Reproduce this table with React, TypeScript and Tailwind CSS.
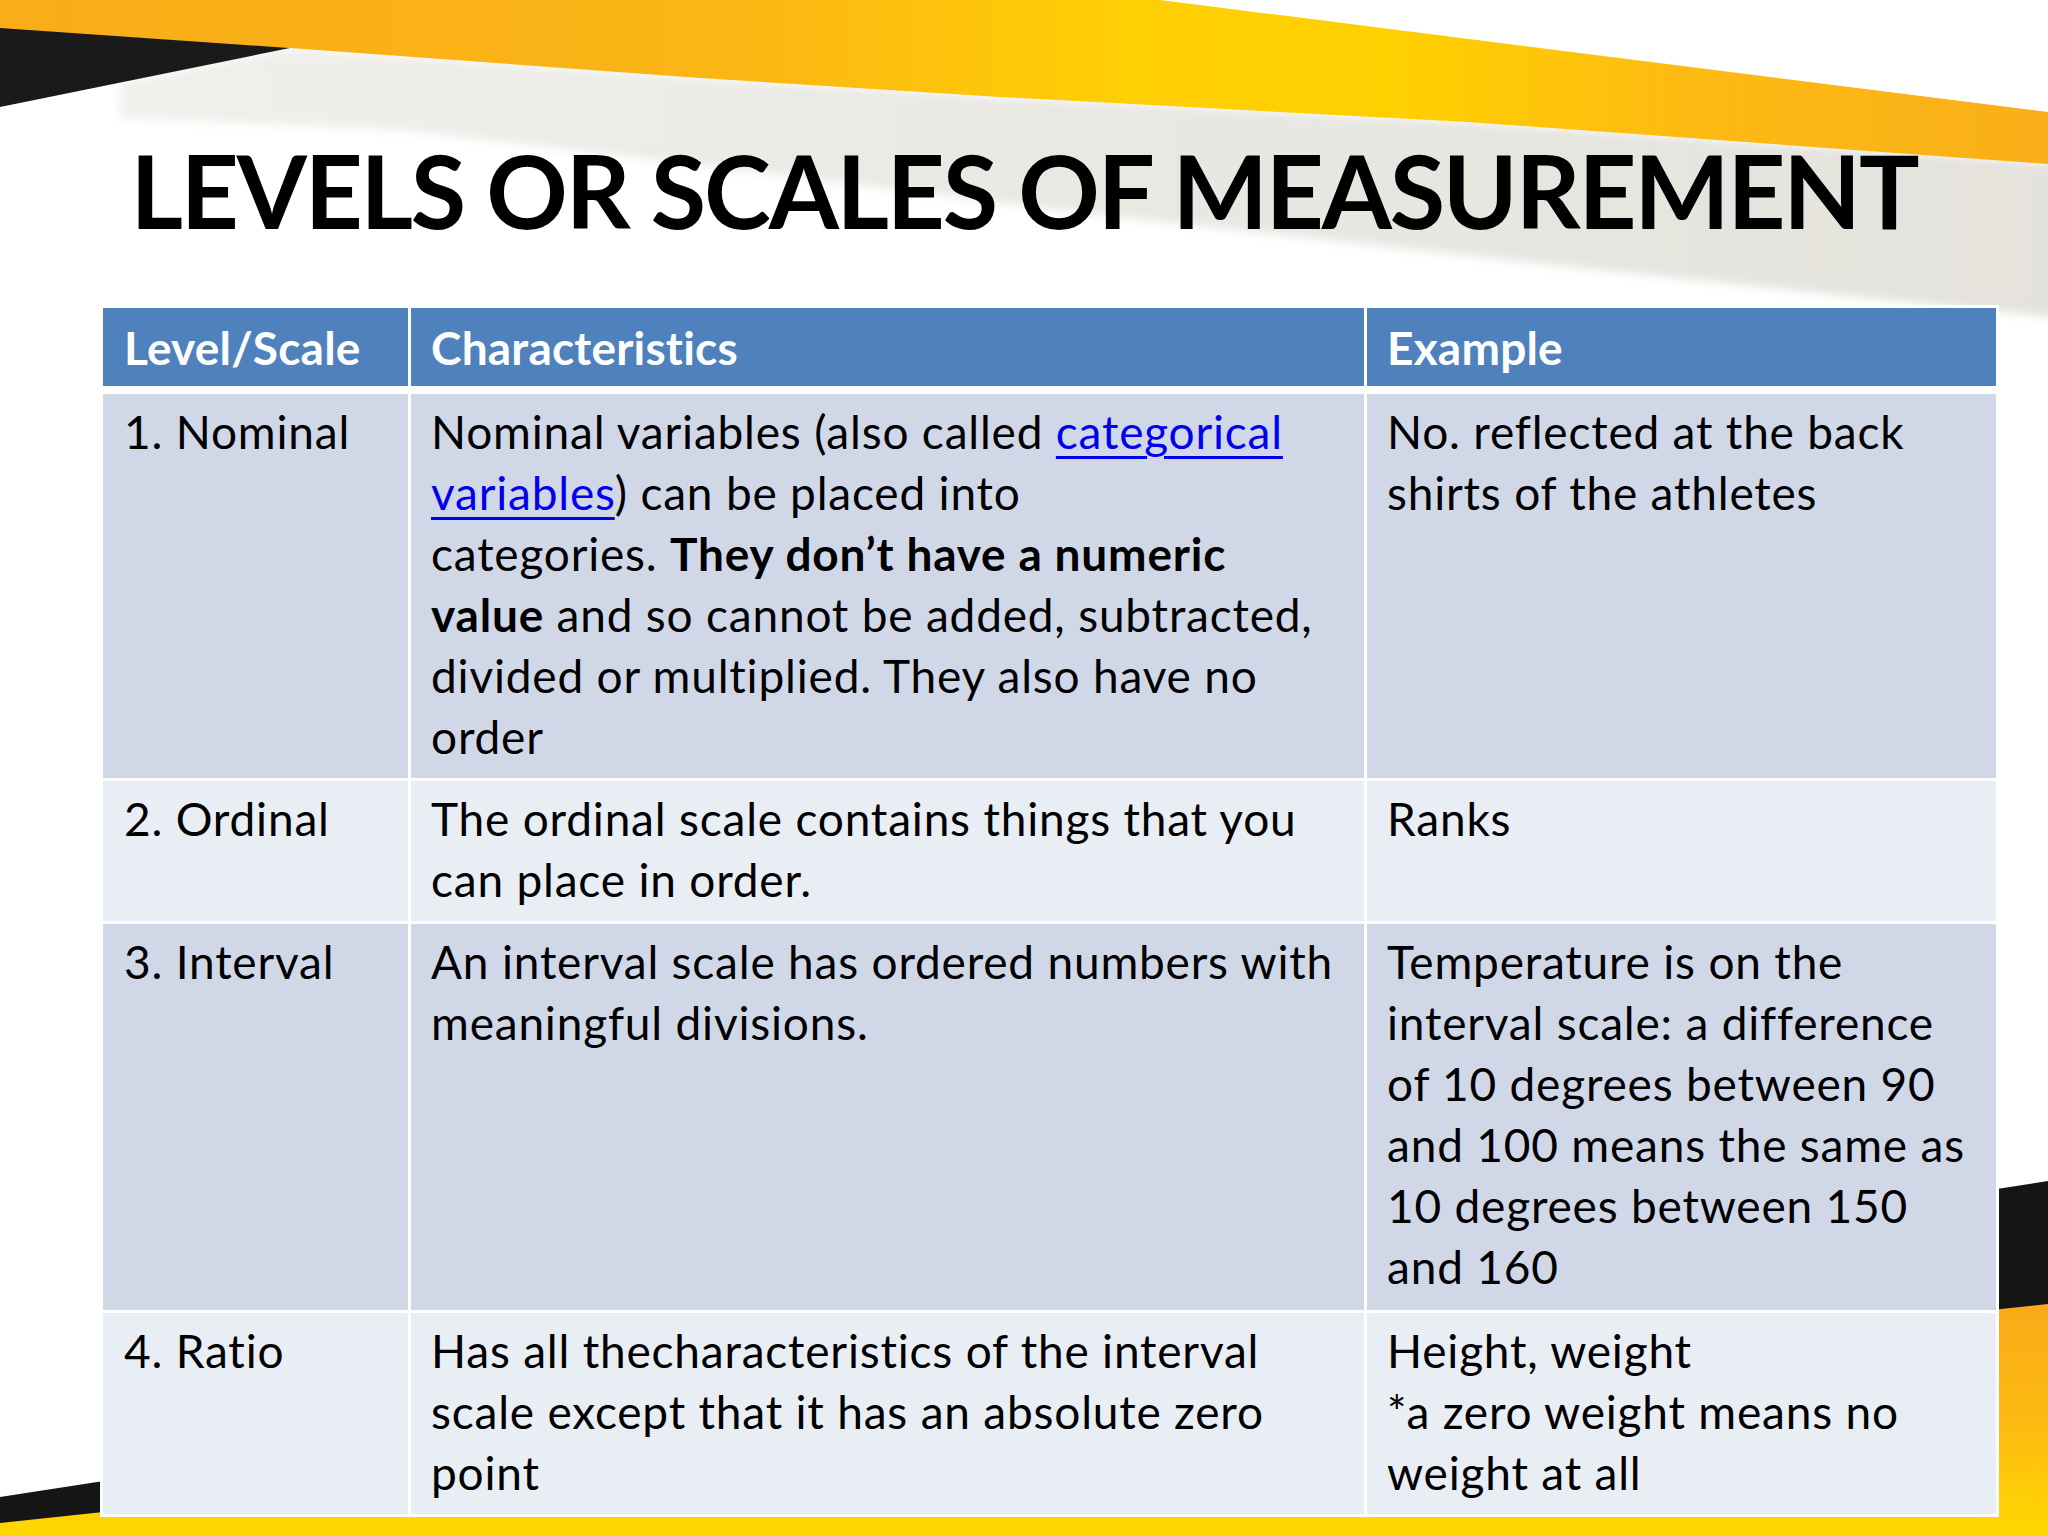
import React from "react";

const Link = ({ children }: { children: React.ReactNode }) => (
  <span className="text-[#0000ee] underline decoration-[2.5px] underline-offset-[7px]">{children}</span>
);

type Row = { bg: string; pb: string; c1: React.ReactNode; c2: React.ReactNode; c3: React.ReactNode };

const rows: Row[] = [
  {
    bg: "bg-[#d0d8e8]",
    pb: "pb-[11px]",
    c1: <>1. Nominal</>,
    c2: (
      <>
        Nominal variables (also called <Link>categorical</Link>
        <br />
        <Link>variables</Link>) can be placed into
        <br />
        categories. <b className="font-bold">They don’t have a numeric</b>
        <br />
        <b className="font-bold">value</b> and so cannot be added, subtracted,
        <br />
        divided or multiplied. They also have no
        <br />
        order
      </>
    ),
    c3: (
      <>
        No. reflected at the back
        <br />
        shirts of the athletes
      </>
    ),
  },
  {
    bg: "bg-[#e9edf4]",
    pb: "pb-[11px]",
    c1: <>2. Ordinal</>,
    c2: (
      <>
        The ordinal scale contains things that you
        <br />
        can place in order.
      </>
    ),
    c3: <>Ranks</>,
  },
  {
    bg: "bg-[#d0d8e8]",
    pb: "pb-[13px]",
    c1: <>3. Interval</>,
    c2: (
      <>
        An interval scale has ordered numbers with
        <br />
        meaningful divisions.
      </>
    ),
    c3: (
      <>
        Temperature is on the
        <br />
        interval scale: a difference
        <br />
        of 10 degrees between 90
        <br />
        and 100 means the same as
        <br />
        10 degrees between 150
        <br />
        and 160
      </>
    ),
  },
  {
    bg: "bg-[#e9edf4]",
    pb: "pb-[11px]",
    c1: <>4. Ratio</>,
    c2: (
      <>
        Has all thecharacteristics of the interval
        <br />
        scale except that it has an absolute zero
        <br />
        point
      </>
    ),
    c3: (
      <>
        Height, weight
        <br />
        *a zero weight means no
        <br />
        weight at all
      </>
    ),
  },
];

function Background() {
  return (
    <svg className="absolute inset-0" width={2048} height={1536} viewBox="0 0 2048 1536">
      <defs>
        <linearGradient id="topband" x1="0" y1="0" x2="2048" y2="0" gradientUnits="userSpaceOnUse">
          <stop offset="0" stopColor="#f8ad19" />
          <stop offset="0.35" stopColor="#fbb515" />
          <stop offset="0.55" stopColor="#ffcf05" />
          <stop offset="0.68" stopColor="#ffd000" />
          <stop offset="0.82" stopColor="#fdbb12" />
          <stop offset="1" stopColor="#f9af1a" />
        </linearGradient>
        <linearGradient id="greyband" x1="0" y1="0" x2="2048" y2="0" gradientUnits="userSpaceOnUse">
          <stop offset="0" stopColor="#f2f1ee" />
          <stop offset="0.5" stopColor="#e9e8e3" />
          <stop offset="1" stopColor="#e4e2dc" />
        </linearGradient>
        <linearGradient id="botband" x1="0" y1="1300" x2="0" y2="1536" gradientUnits="userSpaceOnUse">
          <stop offset="0" stopColor="#f9aa18" />
          <stop offset="0.55" stopColor="#fdbb12" />
          <stop offset="1" stopColor="#ffd800" />
        </linearGradient>
        <filter id="soft" x="-5%" y="-20%" width="110%" height="140%">
          <feGaussianBlur stdDeviation="5" />
        </filter>
      </defs>
      <polygon
        points="120,82 290,48 700,78 1000,97 1468,122 2048,163 2060,163 2060,318 1600,270 1100,215 700,165 400,130 120,118"
        fill="url(#greyband)"
        filter="url(#soft)"
      />
      <polygon
        points="0,0 1160,0 2048,112 2048,164 1468,122 1000,97 700,78 290,48 0,32"
        fill="url(#topband)"
      />
      <polygon points="0,28 290,48 0,107" fill="#1a1a1a" />
      <polygon points="0,1520 2048,1300 2048,1536 0,1536" fill="url(#botband)" />
      <polygon points="0,1497 2048,1181 2048,1304 0,1523" fill="#151515" />
    </svg>
  );
}

export default function App() {
  return (
    <div className="relative w-[2048px] h-[1536px] overflow-hidden bg-white font-['Lato',sans-serif] text-black">
      <Background />
      <div className="relative flex flex-col">
        <div className="h-[305px] pt-[139px]">
          <h1 className="text-center text-[101px] leading-[102px] font-bold tracking-[-2.2px] whitespace-nowrap">
            LEVELS OR SCALES OF MEASUREMENT
          </h1>
        </div>
        <div className="ml-[100px] w-[1899px] bg-white p-[3px] flex flex-col gap-[3px]">
          <div className="grid grid-cols-[305px_953px_629px] gap-x-[3px] mb-[5px] text-white font-bold text-[46px] leading-[61px] tracking-[0.2px]">
            <div className="bg-[#4f81bd] pl-[21px] pr-[10px] pt-[9px] pb-[8px] whitespace-nowrap">Level/Scale</div>
            <div className="bg-[#4f81bd] px-[20px] pt-[9px] pb-[8px] whitespace-nowrap">Characteristics</div>
            <div className="bg-[#4f81bd] px-[20px] pt-[9px] pb-[8px] whitespace-nowrap">Example</div>
          </div>
          {rows.map((r, i) => (
            <div key={i} className="grid grid-cols-[305px_953px_629px] gap-x-[3px] text-[46px] leading-[61px] tracking-[0.8px]">
              <div className={`${r.bg} ${r.pb} pl-[21px] pr-[10px] pt-[7px] whitespace-nowrap`}>{r.c1}</div>
              <div className={`${r.bg} ${r.pb} px-[20px] pt-[7px] whitespace-nowrap`}>{r.c2}</div>
              <div className={`${r.bg} ${r.pb} px-[20px] pt-[7px] whitespace-nowrap`}>{r.c3}</div>
            </div>
          ))}
        </div>
      </div>
    </div>
  );
}
